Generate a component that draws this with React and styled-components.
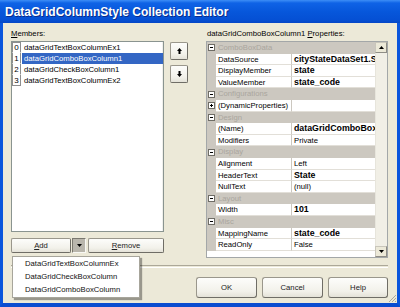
import React from "react";
import styled, { createGlobalStyle } from "styled-components";

const Global = createGlobalStyle`
  html, body { margin: 0; padding: 0; background: #ECE9D8; }
  body { font-family: "Liberation Sans", Arial, sans-serif; }
`;

const UI_FONT = `"Liberation Sans", Arial, sans-serif`;

const Window = styled.div`
  width: 400px;
  height: 307px;
  display: flex;
  flex-direction: column;
  overflow: hidden;
  background: #ECE9D8;
`;

const TitleBar = styled.div`
  height: 23px;
  flex: none;
  display: flex;
  align-items: center;
  padding-left: 5px;
  background: linear-gradient(#3D8EF6 0px, #0F63E6 3px, #0757DB 50%, #0550D4 85%, #0446C6 100%);
  color: #fff;
  font: bold 12px ${UI_FONT};
  text-shadow: 1px 1px 0 #0A2C8A;
  box-sizing: border-box;
  padding-top: 1px;
`;

const Frame = styled.div`
  flex: 1;
  display: flex;
  flex-direction: column;
  border-left: 3px solid #0A55DC;
  border-right: 3px solid #0A55DC;
  border-bottom: 4px solid #0A4CD0;
  position: relative;
  padding: 5px 9px 0 8px;
  font: 7.7px ${UI_FONT};
  color: #000;
`;

const TopSection = styled.div`
  display: flex;
  height: 230px;
`;

const LeftColumn = styled.div`
  width: 153px;
  display: flex;
  flex-direction: column;
`;

const Label = styled.div`
  height: 13px;
  line-height: 11px;
  white-space: nowrap;
  padding-left: ${(p) => p.$indent || 0}px;
`;

const U = styled.span`
  text-decoration: underline;
`;

const ListBox = styled.div`
  height: 191px;
  box-sizing: border-box;
  border: 1px solid #8A9490;
  background: #fff;
  box-shadow: inset -1px 0 0 #F0F0EC;
`;

const ListRow = styled.div`
  height: 11px;
  display: flex;
  align-items: stretch;
`;

const IndexCell = styled.div`
  width: 9px;
  box-sizing: border-box;
  border: 1px solid #8E8E8E;
  border-top-color: ${(p) => (p.$first ? "#8E8E8E" : "transparent")};
  margin-top: ${(p) => (p.$first ? 0 : -1)}px;
  height: ${(p) => (p.$first ? 11 : 12)}px;
  display: flex;
  align-items: center;
  justify-content: center;
  font-size: 8px;
  background: #fff;
`;

const ItemText = styled.div`
  flex: 1;
  margin-left: 1px;
  padding-left: 2px;
  line-height: 11px;
  background: ${(p) => (p.$selected ? "#3366C4" : "transparent")};
  color: ${(p) => (p.$selected ? "#fff" : "#000")};
  white-space: nowrap;
`;

const ButtonRow = styled.div`
  display: flex;
  margin-top: 6px;
  height: 15px;
`;

const PushButton = styled.div`
  width: ${(p) => (p.$w ? `${p.$w}px` : "auto")};
  flex: ${(p) => (p.$grow ? 1 : "none")};
  box-sizing: border-box;
  border: 1px solid #9A978C;
  border-right-color: #6F6D66;
  border-bottom-color: #6F6D66;
  border-radius: 2px;
  background: linear-gradient(#FDFDFB, #F2F1EA 70%, #E4E2D8);
  display: flex;
  align-items: center;
  justify-content: center;
  font: 7.7px ${UI_FONT};
  color: #222;
`;

const SplitButton = styled.div`
  width: 14px;
  margin-left: 1px;
  margin-right: 2px;
  box-sizing: border-box;
  border: 1px solid #7A786F;
  border-right-color: #F8F8F4;
  border-bottom-color: #F8F8F4;
  background: #B9B6AC;
  display: flex;
  align-items: center;
  justify-content: center;
`;

const MidColumn = styled.div`
  width: 18px;
  margin-left: 6px;
  padding-top: 14px;
  display: flex;
  flex-direction: column;
  gap: 5px;
`;

const ArrowButton = styled(PushButton)`
  height: 18px;
  width: 18px;
`;

const RightColumn = styled.div`
  width: 182px;
  margin-left: 18px;
  display: flex;
  flex-direction: column;
`;

const PropGrid = styled.div`
  height: 217px;
  box-sizing: border-box;
  border: 1px solid #A3A7A8;
  background: #fff;
  display: flex;
`;

const Rows = styled.div`
  flex: 1;
  min-width: 0;
  display: flex;
  flex-direction: column;
  overflow: hidden;
`;

const PropRow = styled.div`
  height: 11.6px;
  flex: none;
  display: grid;
  grid-template-columns: 9px 76px minmax(0, 1fr);
  background: ${(p) => (p.$category ? "#CCC8C0" : "#fff")};
`;

const Gutter = styled.div`
  background: #CCC8C0;
  display: flex;
  align-items: center;
  justify-content: center;
`;

const CategoryText = styled.div`
  grid-column: 2 / 4;
  padding-left: 2px;
  line-height: 11.6px;
  color: #AAA69E;
  white-space: nowrap;
`;

const NameCell = styled.div`
  padding-left: 2px;
  line-height: 11px;
  border-bottom: 0.6px solid #E2DFD8;
  border-right: 1px solid #CCC8C0;
  white-space: nowrap;
  overflow: hidden;
`;

const ValueCell = styled.div`
  padding-left: 2px;
  line-height: 11px;
  border-bottom: 0.6px solid #E2DFD8;
  font-weight: ${(p) => (p.$bold ? "bold" : "normal")};
  font-size: ${(p) => (p.$bold ? "8.8px" : "7.7px")};
  white-space: nowrap;
  overflow: hidden;
`;

const ScrollBar = styled.div`
  width: 12px;
  flex: none;
  display: flex;
  flex-direction: column;
  background: #F3F2EC;
`;

const ScrollTrack = styled.div`
  flex: 1;
  background: #F1EFE6;
  border-left: 1px solid #E7E5DC;
`;

const ScrollBtn = styled.div`
  height: 11px;
  box-sizing: border-box;
  border: 1px solid #C9C6BB;
  border-right-color: #8F8D86;
  border-bottom-color: #8F8D86;
  background: #ECE9D8;
  display: flex;
  align-items: center;
  justify-content: center;
`;

const Separator = styled.div`
  margin-top: 7px;
  height: 1px;
  border-top: 1px solid #ACA899;
  border-bottom: 1px solid #FFFFFF;
`;

const BottomRow = styled.div`
  margin-top: 9px;
  display: flex;
  justify-content: flex-end;
  gap: 5px;
`;

const DialogButton = styled(PushButton)`
  height: 21px;
  width: ${(p) => p.$w}px;
  border-radius: 3px;
`;

const Menu = styled.div`
  position: absolute;
  left: 9px;
  top: 233px;
  width: 128px;
  height: 42px;
  box-sizing: border-box;
  background: #fff;
  border: 1px solid #A7A59B;
  box-shadow: 2px 2px 1px rgba(0, 0, 0, 0.35);
  padding: 1px 0 0 12px;
  z-index: 3;
`;

const MenuItem = styled.div`
  height: 12.8px;
  line-height: 12.8px;
  white-space: nowrap;
  color: #111;
`;

const Grip = styled.svg`
  position: absolute;
  right: 0;
  bottom: 0;
`;

const Tri = ({ down }) => (
  <svg width="5" height="3" viewBox="0 0 5 3">
    <path d={down ? "M0 0H5L2.5 3Z" : "M0 3H5L2.5 0Z"} fill="#000" />
  </svg>
);

const BigArrow = ({ down }) => (
  <svg width="5" height="6" viewBox="0 0 5 6">
    {down ? (
      <path d="M1.5 0H3.5V3H5L2.5 6L0 3H1.5Z" fill="#000" />
    ) : (
      <path d="M2.5 0L5 3H3.5V6H1.5V3H0Z" fill="#000" />
    )}
  </svg>
);

const Expander = ({ plus }) => (
  <svg width="7" height="7" viewBox="0 0 7 7">
    <rect x="0.5" y="0.5" width="6" height="6" fill="#fff" stroke="#6F6D66" />
    <path d="M2 3.5H5" stroke="#000" />
    {plus && <path d="M3.5 2V5" stroke="#000" />}
  </svg>
);

const members = [
  "dataGridTextBoxColumnEx1",
  "dataGridComboBoxColumn1",
  "dataGridCheckBoxColumn1",
  "dataGridTextBoxColumnEx2",
];

const props = [
  { cat: "ComboBoxData" },
  { n: "DataSource", v: "cityStateDataSet1.States", b: true },
  { n: "DisplayMember", v: "state", b: true },
  { n: "ValueMember", v: "state_code", b: true },
  { cat: "Configurations" },
  { n: "(DynamicProperties)", v: "", plus: true },
  { cat: "Design" },
  { n: "(Name)", v: "dataGridComboBoxColumn1", b: true },
  { n: "Modifiers", v: "Private" },
  { cat: "Display" },
  { n: "Alignment", v: "Left" },
  { n: "HeaderText", v: "State", b: true },
  { n: "NullText", v: "(null)" },
  { cat: "Layout" },
  { n: "Width", v: "101", b: true },
  { cat: "Misc" },
  { n: "MappingName", v: "state_code", b: true },
  { n: "ReadOnly", v: "False" },
];

export default function App() {
  return (
    <>
      <Global />
      <Window>
        <TitleBar>DataGridColumnStyle Collection Editor</TitleBar>
        <Frame>
          <TopSection>
            <LeftColumn>
              <Label>
                <U>M</U>embers:
              </Label>
              <ListBox>
                {members.map((m, i) => (
                  <ListRow key={m}>
                    <IndexCell $first={i === 0}>{i}</IndexCell>
                    <ItemText $selected={i === 1}>{m}</ItemText>
                  </ListRow>
                ))}
              </ListBox>
              <ButtonRow>
                <PushButton $w={60}>
                  <span>
                    <U>A</U>dd
                  </span>
                </PushButton>
                <SplitButton>
                  <Tri down />
                </SplitButton>
                <PushButton $grow>
                  <span>
                    <U>R</U>emove
                  </span>
                </PushButton>
              </ButtonRow>
            </LeftColumn>
            <MidColumn>
              <ArrowButton>
                <BigArrow />
              </ArrowButton>
              <ArrowButton>
                <BigArrow down />
              </ArrowButton>
            </MidColumn>
            <RightColumn>
              <Label $indent={1}>
                dataGridComboBoxColumn1 <U>P</U>roperties:
              </Label>
              <PropGrid>
                <Rows>
                  {props.map((p, i) =>
                    p.cat ? (
                      <PropRow key={i} $category>
                        <Gutter>
                          <Expander />
                        </Gutter>
                        <CategoryText>{p.cat}</CategoryText>
                      </PropRow>
                    ) : (
                      <PropRow key={i}>
                        <Gutter>{p.plus && <Expander plus />}</Gutter>
                        <NameCell>{p.n}</NameCell>
                        <ValueCell $bold={p.b}>{p.v}</ValueCell>
                      </PropRow>
                    )
                  )}
                </Rows>
                <ScrollBar>
                  <ScrollBtn>
                    <Tri />
                  </ScrollBtn>
                  <ScrollTrack />
                  <ScrollBtn>
                    <Tri down />
                  </ScrollBtn>
                </ScrollBar>
              </PropGrid>
            </RightColumn>
          </TopSection>
          <Separator />
          <BottomRow>
            <DialogButton $w={61}>OK</DialogButton>
            <DialogButton $w={61}>Cancel</DialogButton>
            <DialogButton $w={60}>Help</DialogButton>
          </BottomRow>
          <Menu>
            <MenuItem>DataGridTextBoxColumnEx</MenuItem>
            <MenuItem>DataGridCheckBoxColumn</MenuItem>
            <MenuItem>DataGridComboBoxColumn</MenuItem>
          </Menu>
          <Grip width="10" height="10" viewBox="0 0 10 10">
            <path d="M9 2L2 9M9 5L5 9M9 8L8 9" stroke="#ACA899" strokeWidth="1" />
          </Grip>
        </Frame>
      </Window>
    </>
  );
}
